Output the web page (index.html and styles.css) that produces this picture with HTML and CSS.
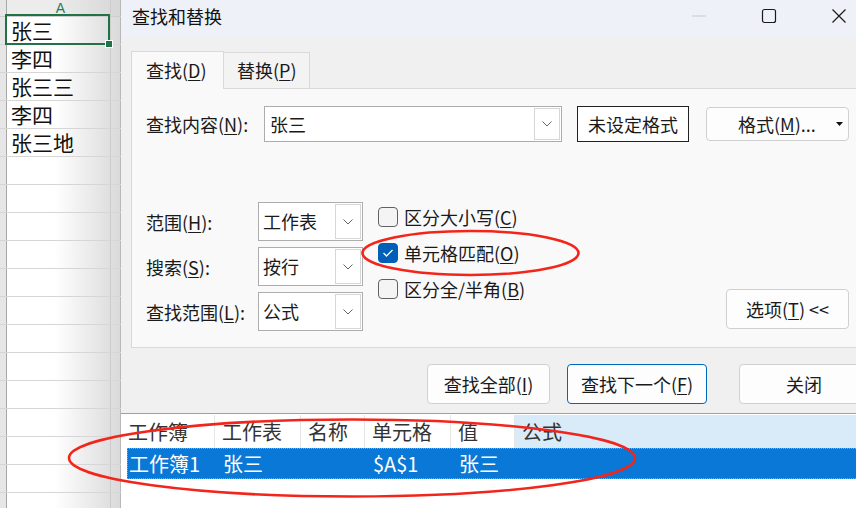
FILE: index.html
```html
<!DOCTYPE html>
<html lang="zh-CN">
<head>
    <meta charset="UTF-8">
    <title>查找和替换</title>
    <link rel="stylesheet" href="styles.css">
</head>
<body>
<div class="screen">
    <div class="sheet">
        <div class="sheet-head">
            <span class="rh"></span>
            <span class="ca head-a"><span>A</span></span>
            <span class="cb"></span>
        </div>
        <div class="sheet-row"><span class="rh"></span><span class="ca sel">张三</span><span class="cb"></span></div>
        <div class="sheet-row"><span class="rh"></span><span class="ca">李四</span><span class="cb"></span></div>
        <div class="sheet-row"><span class="rh"></span><span class="ca">张三三</span><span class="cb"></span></div>
        <div class="sheet-row"><span class="rh"></span><span class="ca">李四</span><span class="cb"></span></div>
        <div class="sheet-row"><span class="rh"></span><span class="ca">张三地</span><span class="cb"></span></div>
        <div class="sheet-row"><span class="rh"></span><span class="ca"></span><span class="cb"></span></div>
        <div class="sheet-row"><span class="rh"></span><span class="ca"></span><span class="cb"></span></div>
        <div class="sheet-row"><span class="rh"></span><span class="ca"></span><span class="cb"></span></div>
        <div class="sheet-row"><span class="rh"></span><span class="ca"></span><span class="cb"></span></div>
        <div class="sheet-row"><span class="rh"></span><span class="ca"></span><span class="cb"></span></div>
        <div class="sheet-row"><span class="rh"></span><span class="ca"></span><span class="cb"></span></div>
        <div class="sheet-row"><span class="rh"></span><span class="ca"></span><span class="cb"></span></div>
        <div class="sheet-row"><span class="rh"></span><span class="ca"></span><span class="cb"></span></div>
        <div class="sheet-row"><span class="rh"></span><span class="ca"></span><span class="cb"></span></div>
        <div class="sheet-row"><span class="rh"></span><span class="ca"></span><span class="cb"></span></div>
        <div class="sheet-row"><span class="rh"></span><span class="ca"></span><span class="cb"></span></div>
        <div class="sheet-row"><span class="rh"></span><span class="ca"></span><span class="cb"></span></div>
        <div class="sheet-row"><span class="rh"></span><span class="ca"></span><span class="cb"></span></div>
    </div>

    <div class="dialog">
        <div class="titlebar">
            <span class="title">查找和替换</span>
            <div class="win-ctrl">
                <span class="wc">
                    <svg width="16" height="16" viewBox="0 0 16 16"><line x1="1" y1="8" x2="15" y2="8" stroke="#c8c8c8" stroke-width="1"/></svg>
                </span>
                <span class="wc">
                    <svg width="16" height="16" viewBox="0 0 16 16"><rect x="1.5" y="1.5" width="13" height="13" rx="2" fill="none" stroke="#1a1a1a" stroke-width="1.2"/></svg>
                </span>
                <span class="wc">
                    <svg width="16" height="16" viewBox="0 0 16 16"><path d="M1.5 1.5 L14.5 14.5 M14.5 1.5 L1.5 14.5" stroke="#1a1a1a" stroke-width="1.2"/></svg>
                </span>
            </div>
        </div>

        <div class="dlg-body">
            <div class="tabs">
                <div class="tab active">查找(<u>D</u>)</div>
                <div class="tab second">替换(<u>P</u>)</div>
            </div>
            <div class="panel">
                <div class="find-row">
                    <span class="lbl lbl-find">查找内容(<u>N</u>):</span>
                    <div class="combo wide">
                        <span class="combo-text">张三</span>
                        <span class="combo-btn"><svg width="10" height="6" viewBox="0 0 10 6"><polyline points="0.5,0.5 5,5 9.5,0.5" fill="none" stroke="#666" stroke-width="1"/></svg></span>
                    </div>
                    <div class="fmt-preview">未设定格式</div>
                    <div class="btn fmt-btn">
                        <span>格式(<u>M</u>)...</span>
                        <svg class="caret" width="7" height="4" viewBox="0 0 7 4"><polygon points="0,0 7,0 3.5,4" fill="#111"/></svg>
                    </div>
                </div>

                <div class="opts">
                    <div class="opt-selects">
                        <div class="sel-row">
                            <span class="lbl">范围(<u>H</u>):</span>
                            <div class="combo small">
                                <span class="combo-text">工作表</span>
                                <span class="combo-btn"><svg width="10" height="6" viewBox="0 0 10 6"><polyline points="0.5,0.5 5,5 9.5,0.5" fill="none" stroke="#666" stroke-width="1"/></svg></span>
                            </div>
                        </div>
                        <div class="sel-row">
                            <span class="lbl">搜索(<u>S</u>):</span>
                            <div class="combo small">
                                <span class="combo-text">按行</span>
                                <span class="combo-btn"><svg width="10" height="6" viewBox="0 0 10 6"><polyline points="0.5,0.5 5,5 9.5,0.5" fill="none" stroke="#666" stroke-width="1"/></svg></span>
                            </div>
                        </div>
                        <div class="sel-row">
                            <span class="lbl">查找范围(<u>L</u>):</span>
                            <div class="combo small">
                                <span class="combo-text">公式</span>
                                <span class="combo-btn"><svg width="10" height="6" viewBox="0 0 10 6"><polyline points="0.5,0.5 5,5 9.5,0.5" fill="none" stroke="#666" stroke-width="1"/></svg></span>
                            </div>
                        </div>
                    </div>

                    <div class="opt-checks">
                        <div class="chk"><span class="box"></span>区分大小写(<u>C</u>)</div>
                        <div class="chk">
                            <span class="box on"><svg width="12" height="10" viewBox="0 0 12 10"><polyline points="1.5,5 4.5,8 10.5,2" fill="none" stroke="#fff" stroke-width="1.3"/></svg></span>单元格匹配(<u>O</u>)
                        </div>
                        <div class="chk"><span class="box"></span>区分全/半角(<u>B</u>)</div>
                    </div>

                    <div class="btn opt-btn">选项(<u>T</u>)&nbsp;&lt;&lt;</div>
                </div>
            </div>

            <div class="actions">
                <div class="btn act-all">查找全部(<u>I</u>)</div>
                <div class="btn act-next">查找下一个(<u>F</u>)</div>
                <div class="btn act-close">关闭</div>
            </div>
        </div>

        <div class="results">
            <div class="res-head">
                <span class="rc c1">工作簿</span>
                <span class="rc c2">工作表</span>
                <span class="rc c3">名称</span>
                <span class="rc c4">单元格</span>
                <span class="rc c5">值</span>
                <span class="rc c6 sorted">公式</span>
            </div>
            <div class="res-row">
                <span class="rc c1">工作簿1</span>
                <span class="rc c2">张三</span>
                <span class="rc c3"></span>
                <span class="rc c4">$A$1</span>
                <span class="rc c5">张三</span>
                <span class="rc c6"></span>
            </div>
        </div>
    </div>

    <svg class="marks" width="856" height="508" viewBox="0 0 856 508">
        <ellipse cx="470.5" cy="253" rx="108" ry="22" fill="none" stroke="#f3251b" stroke-width="2.6"/>
        <ellipse cx="352" cy="458" rx="283" ry="38.5" fill="none" stroke="#f3251b" stroke-width="2.6"/>
    </svg>
</div>
</body>
</html>
```

FILE: styles.css
```css
* {
    box-sizing: border-box;
}
html, body {
    margin: 0;
    padding: 0;
}
body {
    width: 856px;
    height: 508px;
    overflow: hidden;
    font-family: "Noto Sans CJK SC", "Microsoft YaHei", sans-serif;
    font-size: 18px;
    color: #1a1a1a;
    background: #fff;
}
u {
    text-decoration-thickness: 1px;
    text-underline-offset: 2px;
}
.screen {
    position: relative;
    display: flex;
    width: 856px;
    height: 508px;
    overflow: hidden;
}

/* sheet behind the dialog */
.sheet {
    flex: 0 0 121px;
    background: linear-gradient(to right, #fff 45%, #d9d9d9 100%);
    font-size: 21px;
    color: #111;
}
.sheet-head {
    display: flex;
    height: 17px;
    border-bottom: 1px solid #cdcdcd;
    background: linear-gradient(to right, #ececec 45%, #d6d6d6 100%);
}
.sheet-row {
    display: flex;
    height: 28px;
    border-bottom: 1px solid #d6d6d6;
}
.rh {
    flex: 0 0 7px;
    background: #e6e6e6;
    border-right: 1px solid #a8a8a8;
}
.ca {
    flex: 0 0 104px;
    padding-left: 4px;
    border-right: 1px solid #cccccc;
    line-height: 27px;
    white-space: nowrap;
}
.cb {
    flex: 0 0 10px;
    border-right: 1px solid #b8b8b8;
}
.head-a {
    text-align: center;
    color: #2a7a52;
    font-family: "Liberation Sans", Arial, sans-serif;
    font-size: 14px;
    line-height: 16px;
}
.head-a span {
    display: block;
}
.ca.sel {
    position: relative;
}
.ca.sel::before {
    content: "";
    position: absolute;
    left: -2px;
    top: -3px;
    right: 0;
    bottom: -1px;
    border: 2px solid #217346;
}
.ca.sel::after {
    content: "";
    position: absolute;
    right: -2px;
    bottom: -3px;
    width: 6px;
    height: 6px;
    background: #217346;
    outline: 1px solid #fff;
}

/* dialog */
.dialog {
    flex: 0 0 761px;
    display: flex;
    flex-direction: column;
    background: #f0f0f0;
}
.titlebar {
    display: flex;
    height: 37px;
    padding-left: 11px;
    background: #eef2f8;
}
.title {
    line-height: 33px;
    color: #111;
}
.win-ctrl {
    display: flex;
    margin-left: auto;
    margin-right: 8px;
}
.wc {
    display: flex;
    align-items: center;
    justify-content: center;
    width: 70px;
    height: 31px;
}

.dlg-body {
    padding: 14px 10px 9px;
}
.tabs {
    display: flex;
    align-items: flex-end;
    height: 37px;
}
.tab {
    height: 36px;
    padding-left: 13px;
    border: 1px solid #d9d9d9;
    border-bottom: none;
    line-height: 35px;
    white-space: nowrap;
}
.tab.active {
    position: relative;
    z-index: 1;
    width: 93px;
    height: 38px;
    margin-bottom: -1px;
    padding-left: 14px;
    background: #f9f9f9;
    line-height: 36px;
}
.tab.second {
    width: 86px;
    border-left: none;
    background: #f3f3f3;
}

.panel {
    width: 741px;
    padding: 17px 22px 16px 14px;
    border: 1px solid #d9d9d9;
    background: #f9f9f9;
}
.find-row {
    display: flex;
    align-items: center;
    height: 36px;
}
.lbl {
    white-space: nowrap;
}
.lbl-find {
    width: 118px;
}
.combo {
    display: flex;
    padding: 1px;
    border: 1px solid #adadad;
    background: #fff;
}
.combo-text {
    flex: 1;
    padding-left: 3px;
    white-space: nowrap;
}
.combo-btn {
    display: flex;
    align-items: center;
    justify-content: center;
    width: 26px;
    border: 1px solid #d6d6d6;
    background: #fff;
}
.combo.wide {
    width: 298px;
    height: 36px;
}
.combo.wide .combo-text {
    padding-left: 4px;
    line-height: 32px;
}
.fmt-preview {
    width: 112px;
    height: 36px;
    margin-left: 15px;
    border: 1px solid #222;
    background: #fff;
    text-align: center;
    line-height: 34px;
}
.btn {
    display: flex;
    align-items: center;
    justify-content: center;
    height: 40px;
    border: 1px solid #d0d0d0;
    border-radius: 4px;
    background: #fdfdfd;
    white-space: nowrap;
}
.fmt-btn {
    justify-content: flex-start;
    width: 143px;
    height: 34px;
    margin-left: 17px;
    padding-left: 31px;
}
.fmt-btn .caret {
    margin-left: auto;
    margin-right: 5px;
}

.opts {
    display: flex;
    align-items: flex-start;
    margin-top: 60px;
}
.opt-selects {
    display: flex;
    flex-direction: column;
    gap: 6px;
}
.sel-row {
    display: flex;
    align-items: center;
    height: 39px;
}
.sel-row .lbl {
    width: 112px;
}
.combo.small {
    width: 105px;
    height: 39px;
}
.combo.small .combo-text {
    line-height: 35px;
}
.opt-checks {
    display: flex;
    flex-direction: column;
    margin-left: 15px;
    margin-top: -3px;
}
.chk {
    display: flex;
    align-items: center;
    height: 36px;
    white-space: nowrap;
}
.box {
    display: flex;
    align-items: center;
    justify-content: center;
    width: 20px;
    height: 20px;
    margin-right: 6px;
    border: 1px solid #616161;
    border-radius: 4px;
    background: #f4f4f4;
}
.box.on {
    border-color: #005fb8;
    background: #005fb8;
}
.opt-btn {
    align-self: flex-end;
    width: 123px;
    margin-left: auto;
    margin-bottom: 2px;
}

.actions {
    display: flex;
    margin-top: 16px;
    padding-left: 296px;
}
.act-all {
    width: 123px;
}
.act-next {
    width: 140px;
    margin-left: 17px;
    border-color: #0067c0;
}
.act-close {
    width: 130px;
    margin-left: 32px;
}

/* results list */
.results {
    flex: 1;
    border-top: 1px solid #a0a0a0;
    background: #fff;
    font-size: 20px;
}
.res-head {
    display: flex;
    height: 33px;
    margin-top: 1px;
    color: #333;
}
.res-head .rc {
    padding-left: 7px;
    border-right: 1px solid #e6e6e6;
    line-height: 33px;
}
.res-head .sorted {
    border-right: none;
    background: #d9eaf8;
}
.rc {
    white-space: nowrap;
}
.c1 { width: 94px; }
.c2 { width: 86px; }
.c3 { width: 64px; }
.c4 { width: 86px; }
.c5 { width: 64px; }
.c6 { flex: 1; }
.res-row {
    display: flex;
    height: 31px;
    margin-left: 6px;
    border: 1px dotted #e39244;
    background: #0a78d6;
    color: #fff;
}
.res-row .rc {
    padding-left: 8px;
    line-height: 29px;
}
.res-row .c1 {
    width: 87px;
    padding-left: 1px;
}

.marks {
    position: absolute;
    left: 0;
    top: 0;
    pointer-events: none;
}
```
